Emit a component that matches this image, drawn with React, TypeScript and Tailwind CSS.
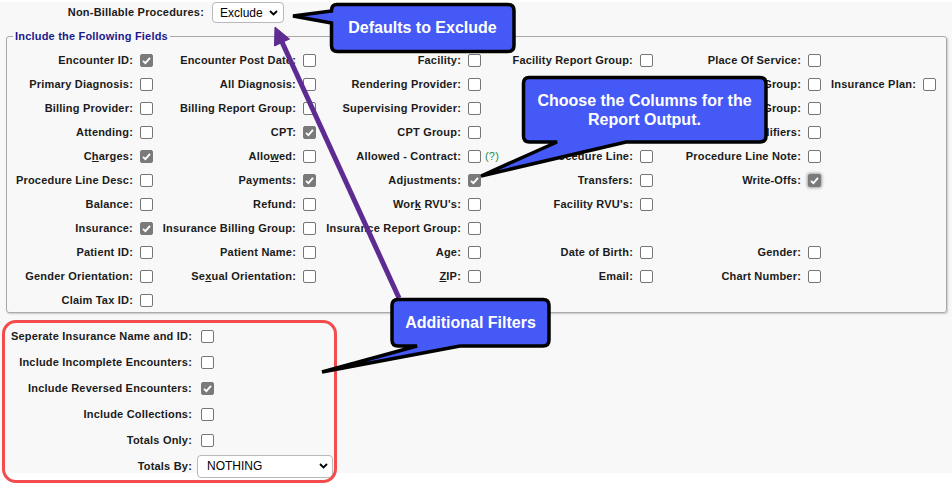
import React from "react";

type Cell = {
  label: React.ReactNode;
  checked?: boolean;
  glow?: boolean;
  help?: boolean;
} | null;

const rows: Cell[][] = [
  [{ label: "Encounter ID:", checked: true }, { label: "Encounter Post Date:" }, { label: "Facility:" }, { label: "Facility Report Group:" }, { label: "Place Of Service:" }, null],
  [{ label: "Primary Diagnosis:" }, { label: "All Diagnosis:" }, { label: "Rendering Provider:" }, { label: "Referring Provider:" }, { label: "Rendering Report Group:" }, { label: "Insurance Plan:" }],
  [{ label: "Billing Provider:" }, { label: "Billing Report Group:" }, { label: "Supervising Provider:" }, { label: "Provider Group:" }, { label: "Referring Report Group:" }, null],
  [{ label: "Attending:" }, { label: "CPT:", checked: true }, { label: "CPT Group:" }, { label: "Diagnosis Group:" }, { label: "Modifiers:" }, null],
  [
    { label: <>C<u>h</u>arges:</>, checked: true },
    { label: <>Allo<u>w</u>ed:</> },
    { label: "Allowed - Contract:", help: true },
    { label: "Procedure Line:" },
    { label: "Procedure Line Note:" },
    null,
  ],
  [{ label: "Procedure Line Desc:" }, { label: "Payments:", checked: true }, { label: "Adjustments:", checked: true }, { label: "Transfers:" }, { label: "Write-Offs:", checked: true, glow: true }, null],
  [{ label: "Balance:" }, { label: "Refund:" }, { label: <>Wor<u>k</u>{" "}RVU's:</> }, { label: "Facility RVU's:" }, null, null],
  [{ label: "Insurance:", checked: true }, { label: "Insurance Billing Group:" }, { label: "Insurance Report Group:" }, null, null, null],
  [{ label: "Patient ID:" }, { label: "Patient Name:" }, { label: "Age:" }, { label: "Date of Birth:" }, { label: "Gender:" }, null],
  [
    { label: "Gender Orientation:" },
    { label: <>Se<u>x</u>ual Orientation:</> },
    { label: <><u>Z</u>IP:</> },
    { label: "Email:" },
    { label: "Chart Number:" },
    null,
  ],
  [{ label: "Claim Tax ID:" }, null, null, null, null, null],
];

const filters = [
  { label: "Seperate Insurance Name and ID:", checked: false },
  { label: "Include Incomplete Encounters:", checked: false },
  { label: "Include Reversed Encounters:", checked: true },
  { label: "Include Collections:", checked: false },
  { label: "Totals Only:", checked: false },
];

function Box({ checked, glow }: { checked?: boolean; glow?: boolean }) {
  return (
    <span
      className={`w-[13px] h-[13px] rounded-[2px] border flex items-center justify-center shrink-0 ${
        checked ? "bg-[#7a7a7a] border-[#7a7a7a]" : "bg-white border-[#767676]"
      } ${glow ? "shadow-[0_0_3px_1px_rgba(0,0,0,0.35)]" : ""}`}
    >
      {checked && (
        <svg width="11" height="11" viewBox="0 0 11 11">
          <polyline points="2,5.8 4.4,8.2 9,2.8" fill="none" stroke="white" strokeWidth="1.8" />
        </svg>
      )}
    </span>
  );
}

function Chevron() {
  return (
    <svg width="9" height="6" viewBox="0 0 9 6">
      <polyline points="1,1 4.5,4.5 8,1" fill="none" stroke="black" strokeWidth="1.8" />
    </svg>
  );
}

export default function App() {
  return (
    <div className="relative w-[952px] h-[484px] overflow-hidden bg-white font-['Liberation_Sans',Arial,sans-serif] text-[#1b1b1b]">
      <div className="mt-[2px] h-[471px] bg-[#f8f8f8]">
        {/* Non-billable */}
        <div className="flex items-center h-[21px]">
          <span className="w-[204px] text-right text-[11px] font-bold tracking-[0.2px]">Non-Billable Procedures:</span>
          <div className="ml-[8px] w-[72px] h-[21px] flex items-center justify-between pl-[7px] pr-[5px] bg-white border border-[#b8b8b8] rounded-[4px] text-[12px] text-black">
            <span>Exclude</span>
            <Chevron />
          </div>
        </div>

        {/* Fields */}
        <fieldset className="mt-[6px] ml-[6px] w-[941px] border border-[#a8a8a8] rounded-[3px] shadow-[1px_1px_2px_rgba(0,0,0,0.2)]">
          <legend className="ml-[6px] px-[2px] text-[11px] leading-[14px] font-bold tracking-[0.2px] text-[#1a1a8c]">
            Include the Following Fields
          </legend>
          <div className="pt-[5px] grid grid-cols-[133px_20px_143px_20px_145px_32px_140px_20px_148px_20px_95px_20px] auto-rows-[24px] text-[11px] font-bold tracking-[0.2px]">
            {rows.map((row, r) =>
              row.map((cell, c) => (
                <React.Fragment key={`${r}-${c}`}>
                  <div className="flex items-center justify-end pr-[7px] whitespace-nowrap">
                    <span>{cell?.label}</span>
                  </div>
                  <div className="flex items-center">
                    {cell && <Box checked={cell.checked} glow={cell.glow} />}
                    {cell?.help && <span className="ml-[4px] font-normal text-[#2a8a4a]">(?)</span>}
                  </div>
                </React.Fragment>
              ))
            )}
          </div>
        </fieldset>

        {/* Additional filters */}
        <div className="mt-[10px] flex flex-col text-[11px] font-bold tracking-[0.2px]">
          {filters.map((f) => (
            <div key={f.label} className="flex items-center h-[26px]">
              <span className="w-[192px] text-right whitespace-nowrap">{f.label}</span>
              <span className="ml-[9px]">
                <Box checked={f.checked} />
              </span>
            </div>
          ))}
          <div className="flex items-center h-[26px]">
            <span className="w-[192px] text-right">Totals By:</span>
            <div className="ml-[5px] w-[136px] h-[23px] flex items-center justify-between pl-[9px] pr-[4px] bg-white border border-[#b8b8b8] rounded-[4px] text-[12px] font-normal tracking-normal text-black">
              <span>NOTHING</span>
              <Chevron />
            </div>
          </div>
        </div>
      </div>

      {/* Annotations */}
      <div className="absolute left-[2px] top-[320px] w-[335px] h-[163px] border-[3px] border-[#f24c4c] rounded-[14px]" />

      <svg className="absolute left-0 top-0 pointer-events-none" width="952" height="484" viewBox="0 0 952 484">
        <line x1="282" y1="42" x2="399" y2="298" stroke="#5e2b92" strokeWidth="5" />
        <polygon points="275,27 274.5,46 289.5,39" fill="#5e2b92" stroke="#5e2b92" strokeWidth="1" strokeLinejoin="round" />

        <path
          d="M337,4.5 H508 Q514,4.5 514,10.5 V45.5 Q514,51.5 508,51.5 H337.5 Q331.5,51.5 331.5,45.5 V23 L293,16 L331.5,11 V10.5 Q331.5,4.5 337,4.5 Z"
          fill="#4459f5"
          stroke="black"
          strokeWidth="3.5"
        />
        <path
          d="M529,77.5 H760 Q766,77.5 766,83.5 V136 Q766,142 760,142 H626 L481,176 L557,142 H529.5 Q523.5,142 523.5,136 V83.5 Q523.5,77.5 529,77.5 Z"
          fill="#4459f5"
          stroke="black"
          strokeWidth="3.5"
        />
        <path
          d="M398,299.5 H543 Q549,299.5 549,305.5 V340 Q549,346 543,346 H460 L322,372 L417,346 H398 Q392,346 392,340 V305.5 Q392,299.5 398,299.5 Z"
          fill="#4459f5"
          stroke="black"
          strokeWidth="3.5"
        />
      </svg>

      <div className="absolute left-[330px] top-[3px] w-[185px] h-[50px] flex items-center justify-center text-white text-[16px] font-bold">
        Defaults to Exclude
      </div>
      <div className="absolute left-[522px] top-[76px] w-[245px] h-[67px] flex items-center justify-center text-center text-white text-[16px] leading-[19px] font-bold">
        Choose the Columns for the
        <br />
        Report Output.
      </div>
      <div className="absolute left-[391px] top-[298px] w-[159px] h-[49px] flex items-center justify-center text-white text-[16px] font-bold">
        Additional Filters
      </div>
    </div>
  );
}
